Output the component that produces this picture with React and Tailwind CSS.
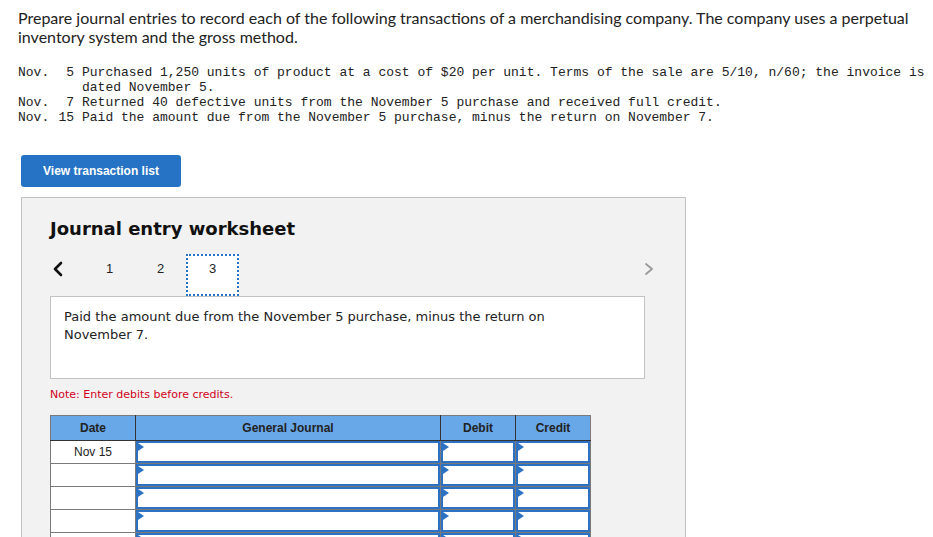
import React from 'react';

const lines = [
  { month: 'Nov.', day: '5', text: 'Purchased 1,250 units of product at a cost of $20 per unit. Terms of the sale are 5/10, n/60; the invoice is' },
  { month: '', day: '', text: 'dated November 5.' },
  { month: 'Nov.', day: '7', text: 'Returned 40 defective units from the November 5 purchase and received full credit.' },
  { month: 'Nov.', day: '15', text: 'Paid the amount due from the November 5 purchase, minus the return on November 7.' },
];

const rows = ['Nov 15', '', '', '', ''];

const verdana = { fontFamily: '"DejaVu Sans", Verdana, sans-serif' };
const arial = { fontFamily: '"Liberation Sans", Arial, sans-serif' };

const Flag = () => (
  <span className="absolute left-0 top-0 w-0 h-0 border-t-[4px] border-b-[4px] border-l-[6px] border-t-transparent border-b-transparent border-l-[#2d72c2]"></span>
);

const InputCell = () => (
  <td className="p-0 border border-[#7a7a7a] h-[23px]">
    <div className="relative h-[22px] border-2 border-[#2d72c2] bg-white">
      <Flag />
    </div>
  </td>
);

const App = () => {
  return (
    <div className="w-[933px] h-[537px] overflow-hidden bg-white">
      <p className="pl-[18px] pr-4 pt-[8px] text-[16px] leading-[19px] text-[#222]" style={{ fontFamily: 'Lato, "Open Sans", sans-serif' }}>
        Prepare journal entries to record each of the following transactions of a merchandising company. The company uses a perpetual inventory system and the gross method.
      </p>

      <div className="mt-[19px] pl-[18px] text-[13px] leading-[15px] text-[#222]" style={{ fontFamily: '"Liberation Mono", monospace' }}>
        {lines.map((l, i) => (
          <div key={i} className="flex whitespace-pre">
            <span className="w-[31px]">{l.month}</span>
            <span className="w-[25px] text-right">{l.day}</span>
            <span className="pl-[8px]">{l.text}</span>
          </div>
        ))}
      </div>

      <div className="pl-[21px] mt-[30px]">
        <button className="w-[160px] h-[32px] rounded-[3px] bg-[#2673c5] text-white text-[12px] font-bold" style={arial}>
          View transaction list
        </button>
      </div>

      <div className="ml-[21px] mt-[10px] w-[665px] h-[400px] bg-[#f2f2f2] border border-[#c2c2c2] pl-[28px]" style={verdana}>
        <h2 className="pt-[19px] text-[18px] leading-[24px] font-bold text-[#111]">Journal entry worksheet</h2>

        <div className="mt-[13px] flex items-stretch h-[42px] w-[604px]">
          <div className="w-[34px] flex items-start justify-start pl-[2px] pt-[7px]">
            <svg width="12" height="16" viewBox="0 0 12 16" fill="none" stroke="#111" strokeWidth="2.6" strokeLinecap="round" strokeLinejoin="round">
              <path d="M9 2 L3 8 L9 14" />
            </svg>
          </div>
          <div className="w-[51px] flex items-start justify-center pt-[7px] text-[13px] leading-[16px] text-[#222]" style={arial}>1</div>
          <div className="w-[51px] flex items-start justify-center pt-[7px] text-[13px] leading-[16px] text-[#222]" style={arial}>2</div>
          <div className="w-[53px] flex items-start justify-center pt-[5px] text-[13px] leading-[16px] text-[#222] bg-white border-2 border-dotted border-[#2673c5]" style={arial}>3</div>
          <div className="flex-1 flex items-start justify-end pt-[8px]">
            <svg width="10" height="14" viewBox="0 0 10 14" fill="none" stroke="#999" strokeWidth="1.8" strokeLinecap="round" strokeLinejoin="round">
              <path d="M2 2 L8 7 L2 12" />
            </svg>
          </div>
        </div>

        <div className="w-[595px] h-[83px] bg-white border border-[#c2c2c2] px-[13px] pt-[11px] text-[13px] leading-[18px] text-[#222]">
          Paid the amount due from the November 5 purchase, minus the return on
          <br />
          November 7.
        </div>

        <p className="mt-[9px] text-[11px] leading-[14px] text-[#d0021b]">Note: Enter debits before credits.</p>

        <table className="mt-[13px] border-collapse w-[540px] table-fixed" style={arial}>
          <colgroup>
            <col className="w-[85px]" />
            <col className="w-[305px]" />
            <col className="w-[75px]" />
            <col className="w-[75px]" />
          </colgroup>
          <thead>
            <tr className="h-[25px] bg-[#68a8e8] text-[12px] font-bold text-[#222]">
              <th className="border border-[#333] border-t-[#7a7a7a] border-l-[#7a7a7a]">Date</th>
              <th className="border border-[#333] border-t-[#7a7a7a]">General Journal</th>
              <th className="border border-[#333] border-t-[#7a7a7a]">Debit</th>
              <th className="border border-[#333] border-t-[#7a7a7a] border-r-[#7a7a7a]">Credit</th>
            </tr>
          </thead>
          <tbody>
            {rows.map((d, i) => (
              <tr key={i}>
                <td className="p-0 border border-[#7a7a7a] h-[23px] bg-white text-center text-[12px] text-[#222]">{d}</td>
                <InputCell />
                <InputCell />
                <InputCell />
              </tr>
            ))}
          </tbody>
        </table>
      </div>
    </div>
  );
};

export default App;
